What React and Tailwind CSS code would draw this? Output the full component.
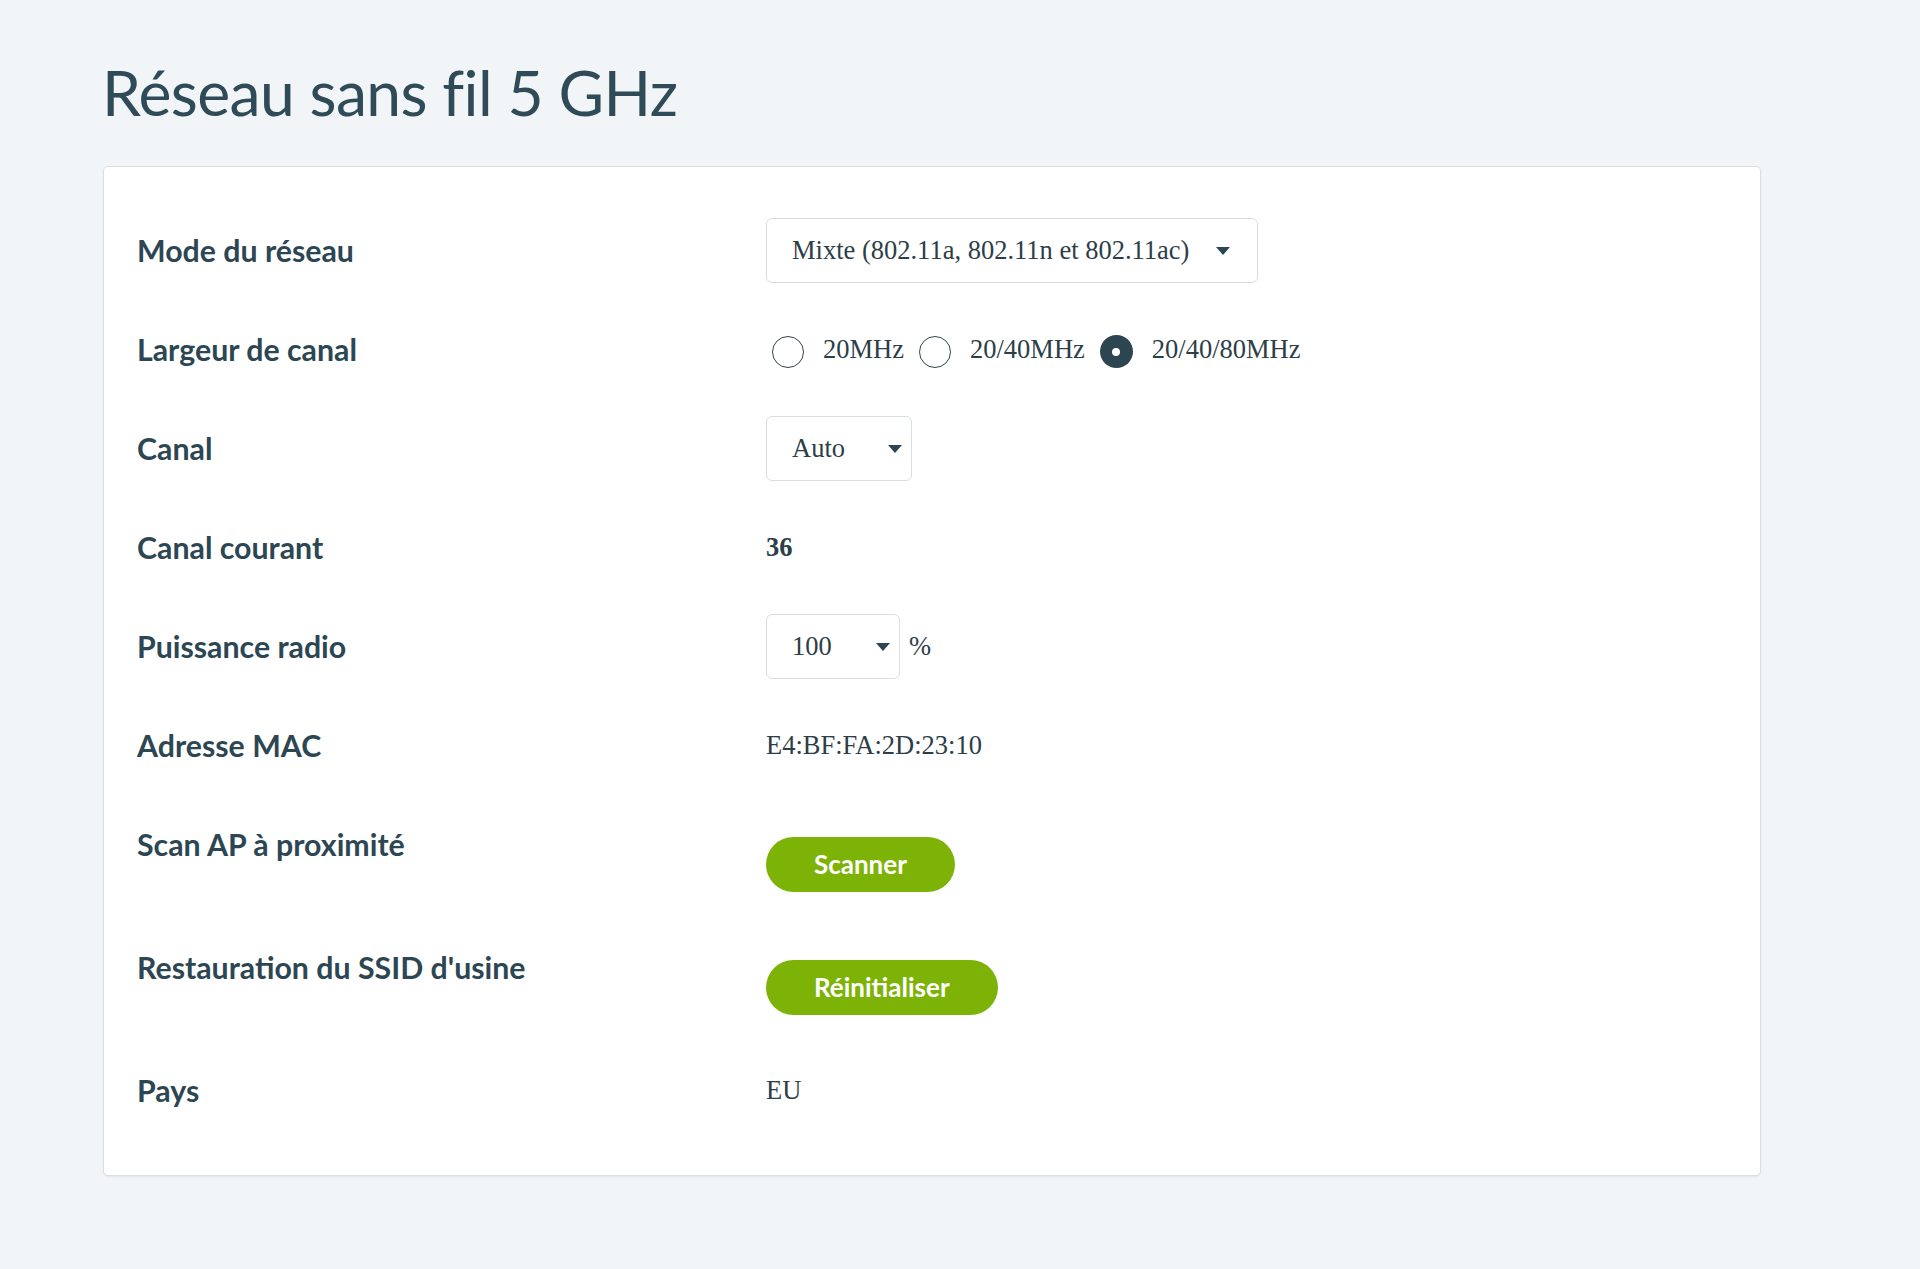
import { useState } from 'react'

const sans = { fontFamily: 'Lato, "Open Sans", sans-serif' }
const serif = { fontFamily: '"Liberation Serif", "Times New Roman", serif' }

function Caret() {
  return (
    <svg width="14" height="8" viewBox="0 0 14 8" className="shrink-0">
      <path d="M0 0 L14 0 L7 8 Z" fill="#2c4550" />
    </svg>
  )
}

function Select({ value, width, pr }) {
  return (
    <div
      className={`h-[65px] ${width} ${pr} pl-[25px] flex items-center justify-between bg-white border border-[#d6dee3] rounded-[6px] text-[26.5px] text-[#2c3e48]`}
      style={serif}
    >
      <span>{value}</span>
      <Caret />
    </div>
  )
}

function Radio({ checked, label, onClick }) {
  return (
    <button type="button" onClick={onClick} className="flex items-center gap-[19px] cursor-pointer">
      {checked ? (
        <span className="w-[33px] h-[33px] rounded-full bg-[#2c4550] flex items-center justify-center mt-[4px]">
          <span className="w-[8px] h-[8px] rounded-full bg-white" />
        </span>
      ) : (
        <span className="w-[32px] h-[32px] rounded-full border-[1.5px] border-[#34444b] bg-white mt-[4px]" />
      )}
      <span className="text-[26.5px] text-[#2c3e48]" style={serif}>{label}</span>
    </button>
  )
}

function Label({ children }) {
  return (
    <div className="w-[629px] shrink-0 h-[65px] flex items-center text-[30.3px] font-bold text-[#2c4753]" style={sans}>
      {children}
    </div>
  )
}

function Row({ label, children }) {
  return (
    <div className="flex items-center h-[65px]">
      <Label>{label}</Label>
      <div className="flex items-center">{children}</div>
    </div>
  )
}

function ActionRow({ label, button }) {
  return (
    <div className="flex items-start pb-[9px]">
      <Label>{label}</Label>
      <button
        type="button"
        className="mt-[25px] h-[55px] px-[48px] rounded-full bg-[#7db307] text-white text-[26px] font-bold"
        style={sans}
      >
        {button}
      </button>
    </div>
  )
}

export default function App() {
  const [width, setWidth] = useState('80')

  return (
    <div className="min-h-screen bg-[#f2f5f8] pl-[102px] pt-[61px] pb-[90px]">
      <h1 className="text-[62.4px] leading-none font-normal text-[#2f4b57] tracking-[-0.6px]" style={sans}>
        Réseau sans fil 5 GHz
      </h1>

      <div className="mt-[43px] ml-[1px] w-[1658px] bg-white border border-[#d9e0e5] rounded-[5px] shadow-[0_1px_2px_rgba(40,60,80,0.08)] pl-[33px] pt-[51px] pb-[52px]">
        <div className="flex flex-col gap-[34px]">
          <Row label="Mode du réseau">
            <Select value="Mixte (802.11a, 802.11n et 802.11ac)" width="w-[492px]" pr="pr-[27px]" />
          </Row>

          <Row label="Largeur de canal">
            <div className="flex items-center gap-[15px] ml-[6px]">
              <Radio checked={width === '20'} label="20MHz" onClick={() => setWidth('20')} />
              <Radio checked={width === '40'} label="20/40MHz" onClick={() => setWidth('40')} />
              <Radio checked={width === '80'} label="20/40/80MHz" onClick={() => setWidth('80')} />
            </div>
          </Row>

          <Row label="Canal">
            <Select value="Auto" width="w-[146px]" pr="pr-[9px]" />
          </Row>

          <Row label="Canal courant">
            <span className="text-[26.5px] font-bold text-[#2c3e48]" style={serif}>36</span>
          </Row>

          <Row label="Puissance radio">
            <Select value="100" width="w-[134px]" pr="pr-[9px]" />
            <span className="ml-[9px] text-[26.5px] text-[#2c3e48]" style={serif}>%</span>
          </Row>

          <Row label="Adresse MAC">
            <span className="text-[26.5px] text-[#2c3e48]" style={serif}>E4:BF:FA:2D:23:10</span>
          </Row>

          <ActionRow label="Scan AP à proximité" button="Scanner" />

          <ActionRow label="Restauration du SSID d'usine" button="Réinitialiser" />

          <Row label="Pays">
            <span className="text-[26.5px] text-[#2c3e48]" style={serif}>EU</span>
          </Row>
        </div>
      </div>
    </div>
  )
}
